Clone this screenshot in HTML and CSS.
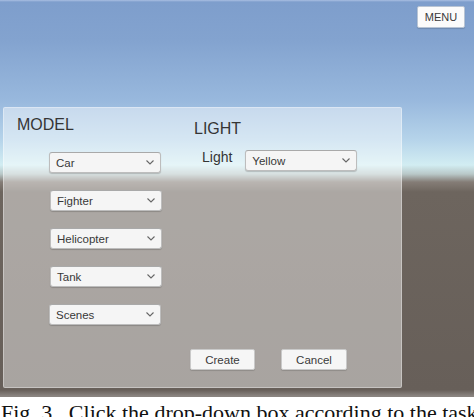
FILE: index.html
```html
<!DOCTYPE html>
<html>
<head>
<meta charset="utf-8">
<link rel="stylesheet" href="styles.css">
</head>
<body>
<div class="scene">
  <div class="topbar"><button class="btn menu">MENU</button></div>
  <div class="panel">
    <div class="col-model">
      <div class="heading">MODEL</div>
      <div class="selects">
        <div class="select"><span>Car</span><svg class="chev" viewBox="0 0 8 5"><path d="M0.5 0.5 L4 4 L7.5 0.5"/></svg></div>
        <div class="select"><span>Fighter</span><svg class="chev" viewBox="0 0 8 5"><path d="M0.5 0.5 L4 4 L7.5 0.5"/></svg></div>
        <div class="select"><span>Helicopter</span><svg class="chev" viewBox="0 0 8 5"><path d="M0.5 0.5 L4 4 L7.5 0.5"/></svg></div>
        <div class="select"><span>Tank</span><svg class="chev" viewBox="0 0 8 5"><path d="M0.5 0.5 L4 4 L7.5 0.5"/></svg></div>
        <div class="select"><span>Scenes</span><svg class="chev" viewBox="0 0 8 5"><path d="M0.5 0.5 L4 4 L7.5 0.5"/></svg></div>
      </div>
    </div>
    <div class="col-light">
      <div class="heading light-h">LIGHT</div>
      <div class="light-row">
        <span class="label">Light</span>
        <div class="select"><span>Yellow</span><svg class="chev" viewBox="0 0 8 5"><path d="M0.5 0.5 L4 4 L7.5 0.5"/></svg></div>
      </div>
      <div class="actions">
        <button class="btn act">Create</button>
        <button class="btn act">Cancel</button>
      </div>
    </div>
  </div>
</div>
<div class="caption">Fig. 3.&nbsp; Click the drop-down box according to the task</div>
</body>
</html>
```
FILE: styles.css
```css
html, body { margin: 0; padding: 0; background: #fff; }
body { width: 474px; height: 417px; overflow: hidden; font-family: "Liberation Sans", Arial, sans-serif; }

.scene {
  height: 397px;
  box-sizing: border-box;
  padding-left: 3px;
  background: linear-gradient(to bottom,
    #a9bfe2 0px, #7e9ecc 2px, #83a3cf 40px, #98b8dd 100px, #b6d4ea 140px,
    #d2edf2 165px, #b9c8c8 174px, #857d77 182px, #6d655e 192px, #675f59 390px, #8a8480 396px, #8a8480 397px);
  display: flex;
  flex-direction: column;
}
.topbar {
  height: 107px;
  display: flex;
  justify-content: flex-end;
  align-items: flex-start;
  padding: 6px 9px 0 0;
  box-sizing: border-box;
}
.btn {
  font-family: "Liberation Sans", Arial, sans-serif;
  background: #f6f6f6;
  border: 1px solid #c9c9c9;
  border-radius: 2px;
  color: #3a3a3a;
  padding: 0;
  box-shadow: 0 1px 1px rgba(0,0,0,0.15);
}
.menu { width: 48px; height: 22px; font-size: 11px; background: #fbfbfb; border-color: #b8c4d4; }

.panel {
  width: 399px;
  height: 281px;
  box-sizing: border-box;
  background: rgba(255,255,255,0.43);
  border: 1px solid rgba(255,255,255,0.35);
  border-radius: 2px;
  display: grid;
  grid-template-columns: 185px 1fr;
}
.heading { font-size: 16px; color: #353535; line-height: 18px; }
.col-model { padding: 8px 0 0 13px; }
.selects { margin: 18px 0 0 32px; display: flex; flex-direction: column; gap: 17px; }
.select {
  width: 112px; height: 21px; box-sizing: border-box;
  background: #f5f5f5;
  border: 1px solid #bdbdbd;
  border-top-color: #a9a9a9;
  border-radius: 3px;
  box-shadow: 0 1px 1px rgba(0,0,0,0.18);
  display: flex; align-items: center; justify-content: space-between;
  padding: 0 6px 0 6px;
  font-size: 11.5px; color: #383838;
}
.chev { width: 8px; height: 5px; fill: none; stroke: #666; stroke-width: 1.1; }
.selects .select:nth-child(n+2):nth-child(-n+4) { margin-left: 1px; }

.col-light { padding: 12px 0 0 5px; display: flex; flex-direction: column; }
.light-row { display: flex; align-items: flex-start; margin-top: 11px; margin-left: 8px; gap: 13px; }
.label { font-size: 14px; color: #353535; line-height: 16px; }
.light-row .select { margin-top: 1px; }
.actions { margin-top: auto; margin-bottom: 17px; display: flex; gap: 26px; margin-left: -4px; }
.act { width: 65px; height: 21px; font-size: 11.5px; }
.act + .act { width: 66px; }

.caption {
  font-family: "Liberation Serif", "Times New Roman", serif;
  font-size: 22px;
  color: #111;
  line-height: 22px;
  padding: 5px 0 0 1px;
  white-space: nowrap;
}
```
